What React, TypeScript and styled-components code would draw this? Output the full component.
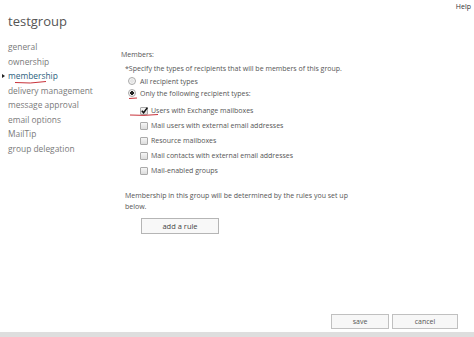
import styled, { createGlobalStyle } from "styled-components";

const GlobalStyle = createGlobalStyle`
    html, body {
        margin: 0;
        padding: 0;
        background: #ffffff;
    }
    body {
        font-family: "Open Sans", "Noto Sans", sans-serif;
        color: #444;
    }
`;

const Page = styled.div`
    position: relative;
    width: 474px;
    height: 337px;
    display: flex;
    flex-direction: column;
    overflow: hidden;
    background: #fff;
`;

const TopBar = styled.div`
    display: flex;
    justify-content: flex-end;
    height: 8px;
    padding: 3px 3px 0 0;
`;

const Help = styled.a`
    font-size: 7px;
    line-height: 8px;
    color: #333;
    text-decoration: none;
`;

const Title = styled.h1`
    margin: 2px 0 0 8px;
    font-size: 13px;
    font-weight: 400;
    line-height: 16px;
    color: #555;
`;

const Body = styled.div`
    flex: 1;
    display: flex;
`;

const Nav = styled.ul`
    list-style: none;
    margin: 11px 0 0;
    padding: 0 0 0 8px;
    width: 121px;
    box-sizing: border-box;
`;

const NavItem = styled.li<{ $active?: boolean }>`
    position: relative;
    font-size: 8.4px;
    line-height: 14.5px;
    color: ${(p) => (p.$active ? "#2b5f7e" : "#7a7a7a")};
    white-space: nowrap;

    &::before {
        content: "";
        display: ${(p) => (p.$active ? "block" : "none")};
        position: absolute;
        left: -6px;
        top: 5px;
        border-left: 3px solid #222;
        border-top: 2.5px solid transparent;
        border-bottom: 2.5px solid transparent;
    }
`;

const Content = styled.div`
    flex: 1;
    padding-top: 21px;
    font-size: 7px;
    color: #555;
`;

const Label = styled.div`
    line-height: 10px;
`;

const Hint = styled.div`
    margin: 4px 0 0 4px;
    line-height: 10px;
`;

const RadioList = styled.div`
    display: flex;
    flex-direction: column;
    margin: 1px 0 0 7px;
`;

const RadioRow = styled.label`
    display: flex;
    align-items: center;
    gap: 4px;
    height: 12px;
`;

const Radio = styled.span<{ $checked?: boolean }>`
    width: 6px;
    height: 6px;
    border-radius: 50%;
    border: 1px solid #aaa;
    background: radial-gradient(circle, ${(p) => (p.$checked ? "#222 0 1.6px" : "#e6e6e6 0 1.6px")}, #f4f4f4 2px);
`;

const CheckList = styled.div`
    display: flex;
    flex-direction: column;
    margin: 4px 0 0 19px;
`;

const CheckRow = styled.label`
    display: flex;
    align-items: center;
    gap: 3px;
    height: 15px;
`;

const Box = styled.span`
    position: relative;
    width: 6px;
    height: 6px;
    border: 1px solid #aaa;
    border-radius: 1px;
    background: linear-gradient(#f6f6f6, #dcdcdc);
`;

const Tick = styled.svg`
    position: absolute;
    left: -1px;
    top: -2px;
`;

const Note = styled.p`
    margin: 12px 0 0 4px;
    width: 225px;
    line-height: 11px;
`;

const RuleButton = styled.button`
    margin: 6px 0 0 20px;
    width: 78px;
    height: 16px;
    border: 1px solid #b5b5b5;
    background: #f8f8f8;
    font-family: inherit;
    font-size: 7.5px;
    color: #444;
    padding: 0;
`;

const Footer = styled.div`
    display: flex;
    justify-content: flex-end;
    gap: 3px;
    padding: 0 16px 3px 0;
`;

const FooterButton = styled.button<{ $w: number }>`
    width: ${(p) => p.$w}px;
    height: 15px;
    border: 1px solid #c0c0c0;
    background: #f7f7f7;
    font-family: inherit;
    font-size: 7px;
    color: #555;
    padding: 0;
`;

const BottomStrip = styled.div`
    height: 5px;
    background: #dedede;
`;

const Marks = styled.svg`
    position: absolute;
    left: 0;
    top: 0;
    pointer-events: none;
`;

const navItems = [
    "general",
    "ownership",
    "membership",
    "delivery management",
    "message approval",
    "email options",
    "MailTip",
    "group delegation",
];

const checks = [
    { text: "Users with Exchange mailboxes", checked: true },
    { text: "Mail users with external email addresses", checked: false },
    { text: "Resource mailboxes", checked: false },
    { text: "Mail contacts with external email addresses", checked: false },
    { text: "Mail-enabled groups", checked: false },
];

function App() {
    return (
        <Page>
            <GlobalStyle />
            <TopBar>
                <Help href="#">Help</Help>
            </TopBar>
            <Title>testgroup</Title>
            <Body>
                <Nav>
                    {navItems.map((item) => (
                        <NavItem key={item} $active={item === "membership"}>
                            {item}
                        </NavItem>
                    ))}
                </Nav>
                <Content>
                    <Label>Members:</Label>
                    <Hint>*Specify the types of recipients that will be members of this group.</Hint>
                    <RadioList>
                        <RadioRow>
                            <Radio />
                            All recipient types
                        </RadioRow>
                        <RadioRow>
                            <Radio $checked />
                            Only the following recipient types:
                        </RadioRow>
                    </RadioList>
                    <CheckList>
                        {checks.map((c) => (
                            <CheckRow key={c.text}>
                                <Box>
                                    {c.checked && (
                                        <Tick width="9" height="9" viewBox="0 0 9 9">
                                            <path d="M1.8 4.8 L3.6 6.8 L7.4 1.6" fill="none" stroke="#111" strokeWidth="1.5" />
                                        </Tick>
                                    )}
                                </Box>
                                {c.text}
                            </CheckRow>
                        ))}
                    </CheckList>
                    <Note>
                        Membership in this group will be determined by the rules you set up below.
                    </Note>
                    <RuleButton>add a rule</RuleButton>
                </Content>
            </Body>
            <Footer>
                <FooterButton $w={58}>save</FooterButton>
                <FooterButton $w={66}>cancel</FooterButton>
            </Footer>
            <BottomStrip />
            <Marks width="474" height="337" viewBox="0 0 474 337">
                <path d="M15 82.5 Q30 84 46 81.5" fill="none" stroke="#c8323a" strokeWidth="1" />
                <path d="M129 98.5 L137 98" fill="none" stroke="#c8323a" strokeWidth="1" />
                <path d="M130 115 Q144 116 158 114.5" fill="none" stroke="#c8323a" strokeWidth="1" />
            </Marks>
        </Page>
    );
}

export default App;
